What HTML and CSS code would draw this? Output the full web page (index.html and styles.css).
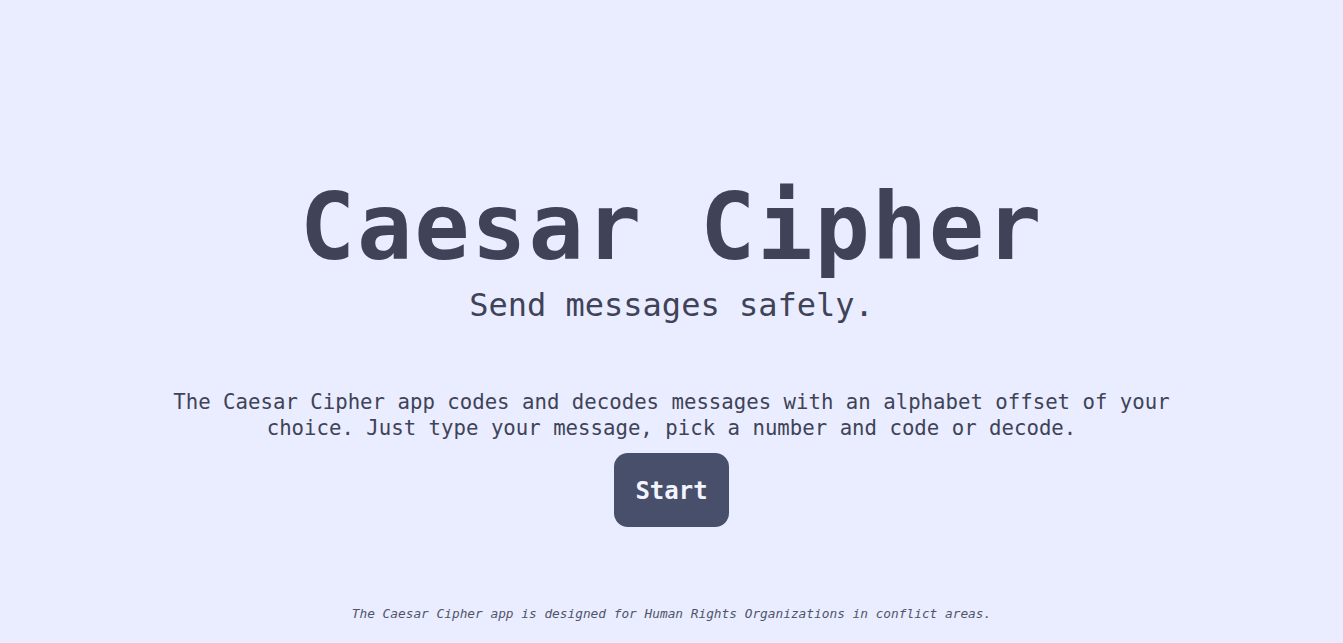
FILE: index.html
```html
<!DOCTYPE html>
<html lang="en">
<head>
  <meta charset="UTF-8" />
  <meta name="viewport" content="width=device-width, initial-scale=1.0"/>
  <title>Caesar Cipher</title>
  <link rel="stylesheet" href="styles.css">
</head>
<body>
  <main class="hero">
    <h1 class="title">Caesar Cipher</h1>
    <h2 class="tagline">Send messages safely.</h2>
    <p class="intro">The Caesar Cipher app codes and decodes messages with an alphabet offset of your choice. Just type your message, pick a number and code or decode.</p>
    <button class="start-btn">Start</button>
  </main>
  <footer class="note">The Caesar Cipher app is designed for Human Rights Organizations in conflict areas.</footer>
</body>
</html>
```

FILE: styles.css
```css
body {
  margin: 0;
  background: #e9edff;
  color: #404357;
  font-family: "DejaVu Sans Mono", "Liberation Mono", monospace;
  text-align: center;
}
.hero {
  display: flex;
  flex-direction: column;
  align-items: center;
  padding-top: 180px;
}
.title {
  margin: 0;
  font-size: 92px;
  line-height: 96px;
  font-weight: bold;
  letter-spacing: 1.8px;
}
.tagline {
  margin: 10px 0 0;
  font-size: 32px;
  line-height: 38px;
  font-weight: normal;
}
.intro {
  margin: 65px 0 0;
  max-width: 1010px;
  font-size: 20.7px;
  line-height: 26px;
}
.start-btn {
  margin-top: 12px;
  padding: 23px 21px 21px;
  border: none;
  border-radius: 14px;
  background: #474f6a;
  color: #f2f4ff;
  font-family: inherit;
  font-size: 24px;
  line-height: 30px;
  font-weight: bold;
  cursor: pointer;
}
.start-btn:hover {
  background: #3b4259;
}
.note {
  margin-top: 79px;
  font-size: 12.8px;
  line-height: 16px;
  font-style: italic;
  color: #50546a;
}
```
